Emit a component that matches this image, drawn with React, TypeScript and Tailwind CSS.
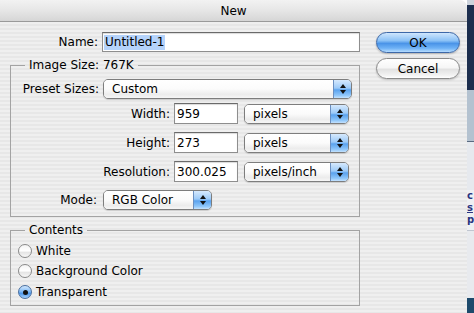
import React from "react";

const stripes =
  "bg-[repeating-linear-gradient(180deg,#efefef_0px,#efefef_2px,#e7e7e7_2px,#e7e7e7_4px)]";

function Arrows() {
  return (
    <svg width="8" height="12" viewBox="0 0 8 12">
      <polygon points="4,1 7,5 1,5" fill="#111" />
      <polygon points="1,7 7,7 4,11" fill="#111" />
    </svg>
  );
}

function Popup({ label, w }: { label: string; w: string }) {
  return (
    <div
      className={`${w} h-[20px] flex rounded-[5px] border border-[#7d7d7d] overflow-hidden shadow-[0_1px_1px_rgba(0,0,0,0.15)]`}
    >
      <div className="flex-1 flex items-center pl-[8px] bg-[linear-gradient(180deg,#ffffff_0%,#fbfbfb_50%,#ececec_80%,#f6f6f6_100%)] text-[12px] leading-none">
        {label}
      </div>
      <div className="w-[18px] flex items-center justify-center border-l border-[#6b8fc0] bg-[linear-gradient(180deg,#d6e9fd_0%,#9ccaf8_45%,#5aa2ee_55%,#8ec6fa_85%,#c4e2fe_100%)]">
        <Arrows />
      </div>
    </div>
  );
}

function TextInput({ value, w }: { value: string; w: string }) {
  return (
    <div
      className={`${w} h-[21px] bg-white border border-[#8e8e8e] border-t-[#6a6a6a] flex items-center pl-[2px] text-[12px] leading-none shadow-[inset_0_1px_1px_rgba(0,0,0,0.15)]`}
    >
      {value}
    </div>
  );
}

function Radio({ label, selected }: { label: string; selected?: boolean }) {
  return (
    <div className="h-[20px] flex items-center pl-[7px]">
      {selected ? (
        <div className="w-[14px] h-[14px] rounded-full border border-[#4a6fa0] bg-[linear-gradient(180deg,#d2e8fe_0%,#7ab6f4_50%,#4b95ea_60%,#a6d2fc_100%)] flex items-center justify-center">
          <div className="w-[5px] h-[5px] rounded-full bg-[#111]" />
        </div>
      ) : (
        <div className="w-[14px] h-[14px] rounded-full border border-[#8a8a8a] bg-[linear-gradient(180deg,#f4f4f4_0%,#ffffff_50%,#e4e4e4_60%,#f8f8f8_100%)]" />
      )}
      <span className="ml-[4px] text-[12px] leading-none">{label}</span>
    </div>
  );
}

export default function App() {
  return (
    <div className="w-[474px] h-[313px] flex overflow-hidden font-['DejaVu_Sans',sans-serif] text-black">
      <div className="w-[467px] h-full flex flex-col">
        <div className="h-[22px] shrink-0 rounded-tr-[7px] border-b border-[#9a9a9a] bg-[linear-gradient(180deg,#f2f2f2_0%,#e6e6e6_50%,#d6d6d6_100%)] flex items-center justify-center text-[12px] leading-none">
          New
        </div>
        <div className={`flex-1 flex ${stripes}`}>
          <div className="w-[361px] flex flex-col pt-[10px]">
            <div className="h-[20px] flex items-center">
              <div className="w-[98px] text-right text-[12px] leading-none">Name:</div>
              <div className="ml-[4px] w-[258px] h-[20px] bg-white border border-[#8e8e8e] border-t-[#6a6a6a] flex items-center pl-[1px] shadow-[inset_0_1px_1px_rgba(0,0,0,0.15)]">
                <span className="bg-[#b5d3fb] text-[12px] leading-[15px] px-[1px]">Untitled-1</span>
              </div>
            </div>

            <fieldset className="ml-[10px] mt-[5px] w-[350px] border border-[#a3a3a3] pb-[6px]">
              <legend className="ml-[14px] px-[4px] text-[12px] leading-[16px]">Image Size: 767K</legend>
              <div className="flex flex-col pt-[5px]">
                <div className="h-[21px] flex items-center">
                  <div className="w-[88px] text-right text-[12px] leading-none">Preset Sizes:</div>
                  <div className="ml-[4px]">
                    <Popup label="Custom" w="w-[249px]" />
                  </div>
                </div>
                {[
                  ["Width:", "959", "pixels", "mt-[4px]"],
                  ["Height:", "273", "pixels", "mt-[8px]"],
                  ["Resolution:", "300.025", "pixels/inch", "mt-[8px]"],
                ].map(([l, v, u, m]) => (
                  <div key={l} className={`h-[21px] flex items-center ${m}`}>
                    <div className="w-[159px] text-right text-[12px] leading-none">{l}</div>
                    <div className="ml-[4px]">
                      <TextInput value={v} w="w-[64px]" />
                    </div>
                    <div className="ml-[6px]">
                      <Popup label={u} w="w-[105px]" />
                    </div>
                  </div>
                ))}
                <div className="h-[21px] mt-[7px] flex items-center">
                  <div className="w-[86px] text-right text-[12px] leading-none">Mode:</div>
                  <div className="ml-[6px]">
                    <Popup label="RGB Color" w="w-[109px]" />
                  </div>
                </div>
              </div>
            </fieldset>

            <fieldset className="ml-[10px] mt-[5px] w-[350px] border border-[#a3a3a3] pb-[3px]">
              <legend className="ml-[14px] px-[4px] text-[12px] leading-[16px]">Contents</legend>
              <div className="flex flex-col pt-[3px]">
                <Radio label="White" />
                <Radio label="Background Color" />
                <div className="mt-[1px]">
                  <Radio label="Transparent" selected />
                </div>
              </div>
            </fieldset>
          </div>

          <div className="ml-[15px] pt-[10px] flex flex-col">
            <div className="w-[84px] h-[21px] rounded-full border border-[#3d68a8] bg-[linear-gradient(180deg,#cfe6fd_0%,#8cc2f6_40%,#4a94e8_55%,#6fb2f6_80%,#b6dcfe_100%)] flex items-center justify-center text-[12px] leading-none shadow-[0_1px_2px_rgba(0,0,0,0.25)]">
              OK
            </div>
            <div className="mt-[5px] w-[84px] h-[21px] rounded-full border border-[#8a8a8a] bg-[linear-gradient(180deg,#ffffff_0%,#f6f6f6_45%,#e2e2e2_55%,#f2f2f2_85%,#ffffff_100%)] flex items-center justify-center text-[12px] leading-none shadow-[0_1px_2px_rgba(0,0,0,0.2)]">
              Cancel
            </div>
          </div>
        </div>
      </div>

      <div className="w-[7px] h-full flex flex-col overflow-hidden">
        <div className="h-[5px] bg-[#cdd3dc]" />
        <div className="h-[85px] bg-[#1c2e4e]" />
        <div className="h-[52px] bg-[#b4c2d0] border-b border-[#5a6a80]" />
        <div className="h-[48px] bg-[#e6e9ee]" />
        <div className="h-[40px] bg-[#eef0f3] flex flex-col text-[10px] leading-[12px] text-[#2a3580] font-bold">
          <span>c</span>
          <span className="underline">s</span>
          <span>p</span>
        </div>
        <div className="h-[68px] bg-[#e8eaee] border-t border-[#c0c6d0]" />
        <div className="flex-1 bg-[#1d4a6c]" />
      </div>
    </div>
  );
}
